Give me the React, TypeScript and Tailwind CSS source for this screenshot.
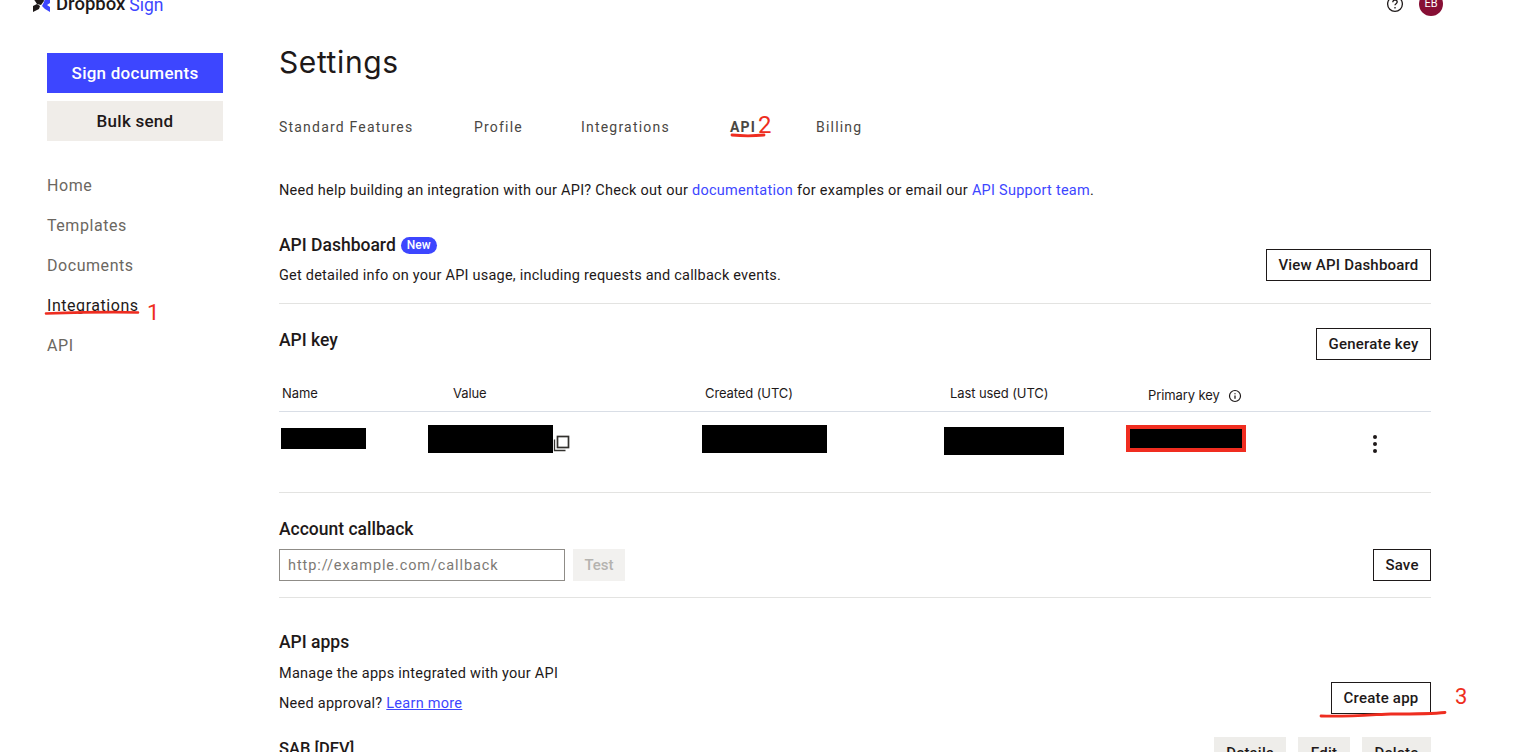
// App.tsx
const font = "font-['Roboto',sans-serif]";

function OutlineButton({ label, className }: { label: string; className: string }) {
  return (
    <button className={`h-8 shrink-0 border border-[#1e1919] bg-white text-center text-[15px] font-medium tracking-[0.2px] text-[#1e1919] ${className}`}>
      {label}
    </button>
  );
}

function GreyButton({ label, className }: { label: string; className: string }) {
  return (
    <button className={`h-8 shrink-0 bg-[#eeedea] text-center text-[15px] font-medium tracking-[0.2px] text-[#1e1919] ${className}`}>
      {label}
    </button>
  );
}

function Logo() {
  return (
    <div className="flex items-center">
      <svg width="17" height="14" viewBox="0 0 17 14" className="ml-[33px] mt-[2px]">
        <polygon points="0,0 10,0 11,3 8,7 4,6" fill="#1e1919" />
        <polygon points="0,14 0,8 4,6 7,8 6,11" fill="#1e1919" />
        <polygon points="12,0 17,0 17,5 14,7 17,9 17,14 12,11 9,8 11,4" fill="#3d46ff" />
      </svg>
      <span className="ml-[6px] mt-[2px] text-[18.5px] font-medium text-[#1e1919]">Dropbox</span>
      <span className="ml-[4px] mt-[2px] text-[17.5px] font-normal text-[#3d46ff]">Sign</span>
    </div>
  );
}

function Sidebar() {
  const nav = ['Home', 'Templates', 'Documents', 'Integrations', 'API'];
  return (
    <aside className="ml-[47px] w-[176px] shrink-0 pt-[33px]">
      <button className="h-10 w-full bg-[#3d46ff] pt-[2px] text-[17px] font-medium tracking-[0.25px] text-white">Sign documents</button>
      <button className="mt-2 h-10 w-full bg-[#f0ede9] pt-[2px] text-[17px] font-medium tracking-[0.25px] text-[#1e1919]">Bulk send</button>
      <nav className="mt-[25px]">
        {nav.map((item) => (
          <div
            key={item}
            className={`flex h-10 items-center text-[16px] tracking-[0.55px] ${item === 'Integrations' ? 'text-[#1e1919]' : 'text-[#6b6761]'}`}
          >
            {item}
          </div>
        ))}
      </nav>
    </aside>
  );
}

function Tabs() {
  const tabs = [
    { label: 'Standard Features', w: 'w-[195px]' },
    { label: 'Profile', w: 'w-[107px]' },
    { label: 'Integrations', w: 'w-[149px]' },
    { label: 'API', w: 'w-[86px]' },
    { label: 'Billing', w: 'w-[60px]' },
  ];
  return (
    <div className="mt-[34px] flex h-5 items-center">
      {tabs.map((t) => (
        <div
          key={t.label}
          className={`${t.w} text-[14px] tracking-[1.2px] ${t.label === 'API' ? 'font-bold text-[#4a4743]' : 'text-[#4a4743]'}`}
        >
          {t.label}
        </div>
      ))}
    </div>
  );
}

function ApiKeyTable() {
  return (
    <div className="mt-[22px]">
      <div className="flex h-[30px] items-start border-b border-[#d9dee6] pt-[2px] text-[13px] tracking-[-0.1px] text-[#1e1919] font-['Inter',sans-serif]">
        <div className="w-[174px] pl-[3px]">Name</div>
        <div className="w-[252px]">Value</div>
        <div className="w-[245px]">Created (UTC)</div>
        <div className="w-[198px]">Last used (UTC)</div>
        <div className="flex items-center pt-[2px]">
          Primary key
          <svg width="14" height="14" viewBox="0 0 14 14" className="ml-[8px]" fill="none" stroke="#1e1919">
            <circle cx="7" cy="7" r="5.5" strokeWidth="1.2" />
            <path d="M7 6.4v3.4" strokeWidth="1.3" />
            <path d="M7 4.2v1.1" strokeWidth="1.3" />
          </svg>
        </div>
      </div>
      <div className="flex h-[81px] items-start border-b border-[#e3e3e1]">
        <div className="ml-[2px] mt-[16px] h-[21px] w-[85px] bg-black" />
        <div className="ml-[62px] mt-[13px] h-[28px] w-[125px] bg-black" />
        <svg width="17" height="17" viewBox="0 0 17 17" className="mt-[23px]" fill="none" stroke="#33312e" strokeWidth="1.3">
          <rect x="4.5" y="1.5" width="11" height="11" strokeWidth="1.7" />
          <path d="M1.5 4.5v11h11" />
        </svg>
        <div className="ml-[132px] mt-[13px] h-[28px] w-[125px] bg-black" />
        <div className="ml-[117px] mt-[15px] h-[28px] w-[120px] bg-black" />
        <div className="ml-[62px] mt-[13px] h-[27px] w-[120px] border-[4px] border-[#f02d20] bg-black" />
        <div className="ml-[127px] mt-[23px] flex flex-col gap-[3px]">
          <span className="size-[4px] rounded-full bg-[#1e1919]" />
          <span className="size-[4px] rounded-full bg-[#1e1919]" />
          <span className="size-[4px] rounded-full bg-[#1e1919]" />
        </div>
      </div>
    </div>
  );
}

function Main() {
  return (
    <main className="ml-[56px] w-[1152px] shrink-0">
      <h1 className="mt-[21px] h-[42px] text-[30px] leading-[42px] tracking-[0.6px] text-[#1e1919] font-['Inter',sans-serif]">Settings</h1>
      <Tabs />
      <p className="mt-[44px] text-[14.5px] leading-5 tracking-[0.26px] text-[#1e1919]">
        Need help building an integration with our API? Check out our <a className="text-[#3d46ff]">documentation</a> for examples or email our <a className="text-[#3d46ff]">API Support team</a>.
      </p>

      <section className="mt-[34px] flex h-[69px] items-start justify-between border-b border-[#e3e3e1]">
        <div>
          <div className="flex h-5 items-center">
            <span className="text-[17.5px] font-medium text-[#1e1919]">API Dashboard</span>
            <span className="ml-[5px] rounded-full bg-[#3d46ff] px-[6px] text-[12px] leading-[17px] font-medium text-white">New</span>
          </div>
          <p className="mt-[12px] text-[14.5px] leading-[18px] tracking-[0.22px] text-[#1e1919]">Get detailed info on your API usage, including requests and callback events.</p>
        </div>
        <OutlineButton label="View API Dashboard" className="mt-[14px] w-[165px]" />
      </section>

      <section className="flex items-start justify-between pt-[24px]">
        <h2 className="mt-[2px] text-[17.5px] leading-5 font-medium text-[#1e1919]">API key</h2>
        <OutlineButton label="Generate key" className="w-[115px]" />
      </section>
      <ApiKeyTable />

      <section className="flex h-[105px] flex-col border-b border-[#e3e3e1] pt-[26px]">
        <h2 className="text-[17.5px] leading-5 font-medium text-[#1e1919]">Account callback</h2>
        <div className="mt-[10px] flex items-center">
          <input
            placeholder="http://example.com/callback"
            className="h-8 w-[286px] border border-[#8f8c87] px-2 text-[14.5px] tracking-[0.9px] outline-none placeholder:text-[#7c7974]"
          />
          <button className="ml-2 h-8 w-[52px] bg-[#f2f1ef] text-[15px] font-medium text-[#b5b3af]">Test</button>
          <OutlineButton label="Save" className="ml-auto w-[58px]" />
        </div>
      </section>

      <section className="flex items-start justify-between pt-[34px]">
        <div>
          <h2 className="text-[17.5px] leading-5 font-medium text-[#1e1919]">API apps</h2>
          <p className="mt-[12px] text-[14.5px] leading-5 tracking-[0.26px] text-[#1e1919]">Manage the apps integrated with your API</p>
          <p className="mt-[10px] text-[14.5px] leading-5 tracking-[0.26px] text-[#1e1919]">
            Need approval? <a className="text-[#3d46ff] underline">Learn more</a>
          </p>
        </div>
        <OutlineButton label="Create app" className="mt-[50px] w-[100px]" />
      </section>
      <div className="mt-[23px] flex items-start justify-between">
        <div className="mt-[2px] text-[16.5px] leading-5 font-medium text-[#1e1919]">SAB [DEV]</div>
        <div className="flex gap-3">
          <GreyButton label="Details" className="w-[72px]" />
          <GreyButton label="Edit" className="w-[52px]" />
          <GreyButton label="Delete" className="w-[69px]" />
        </div>
      </div>
    </main>
  );
}

function Annotations() {
  return (
    <>
      <svg className="pointer-events-none absolute left-0 top-0" width="1515" height="752" fill="none" stroke="#ee2d20" strokeLinecap="round">
        <path d="M46 313.500c30-1 62-2 92-1" strokeWidth="2.6" />
        <path d="M732 135c10 1 22 1 32 0" strokeWidth="2.8" />
        <path d="M1321 716c30 1 60-2 70-2s40 0 54-1.500" strokeWidth="2.8" />
      </svg>
      <span className="absolute left-[147px] top-[300px] text-[22px] leading-[26px] text-[#ee2d20]">1</span>
      <span className="absolute left-[758px] top-[111px] text-[24px] leading-[28px] text-[#ee2d20]">2</span>
      <span className="absolute left-[1455px] top-[684px] text-[22px] leading-[26px] text-[#ee2d20]">3</span>
    </>
  );
}

export default function App() {
  return (
    <div className={`relative h-[752px] w-[1515px] overflow-hidden bg-white ${font}`}>
      <header className="mt-[-12px] flex h-[32px] items-center justify-between">
        <Logo />
        <div className="mr-[72px] flex items-center gap-[15px]">
          <svg width="18" height="18" viewBox="0 0 18 18" fill="none" stroke="#1e1919" strokeWidth="1.3">
            <circle cx="9" cy="9" r="7.4" />
            <path d="M6.8 7.200c0-1.300 1-2.100 2.200-2.100s2.200.8 2.200 2c0 1.600-2.200 1.600-2.200 3.200" />
            <path d="M9 12v1.400" />
          </svg>
          <div className="flex size-[24px] items-center justify-center rounded-full bg-[#870f35] text-[11px] text-white">EB</div>
        </div>
      </header>
      <div className="flex">
        <Sidebar />
        <Main />
      </div>
      <Annotations />
    </div>
  );
}
